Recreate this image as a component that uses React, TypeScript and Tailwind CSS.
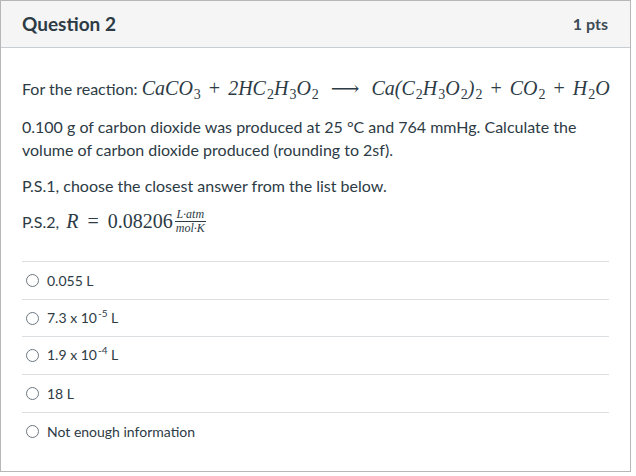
import React from "react";

const serif = { fontFamily: '"Liberation Serif", "DejaVu Serif", serif' };

function M({ children }: { children: React.ReactNode }) {
    return (
        <span className="italic text-[20px]" style={serif}>
            {children}
        </span>
    );
}

function Sub({ children }: { children: React.ReactNode }) {
    return <span className="not-italic text-[14px] relative top-[4px] ml-[1px]">{children}</span>;
}

function Op({ children }: { children: React.ReactNode }) {
    return <span className="not-italic mx-[8px]">{children}</span>;
}

function Exp({ children }: { children: React.ReactNode }) {
    return <span className="text-[10px] relative top-[-6px] ml-[1px]">{children}</span>;
}

const answers = [
    <>0.055 L</>,
    <>
        7.3 x 10<Exp>-5</Exp> L
    </>,
    <>
        1.9 x 10<Exp>-4</Exp> L
    </>,
    <>18 L</>,
    <>Not enough information</>,
];

export default function App() {
    return (
        <div className="w-[636px] h-[476px] bg-white" style={{ fontFamily: "Lato, sans-serif" }}>
            <div className="w-[631px] h-[472px] border border-[#b7b7b7] flex flex-col text-[#2d3b45]">
                <div className="h-[47px] bg-[#f5f5f5] border-b border-[#c7cdd1] flex items-center justify-between pl-[21px] pr-[22px] shrink-0">
                    <span className="text-[19px] font-bold">Question 2</span>
                    <span className="text-[16px] font-bold text-[#3d4b55]">1 pts</span>
                </div>
                <div className="px-[21px] pt-[29px] text-[16px] leading-[23px]">
                    <p className="whitespace-nowrap">
                        For the reaction:{" "}
                        <M>
                            CaCO<Sub>3</Sub>
                            <Op>+</Op>2HC<Sub>2</Sub>H<Sub>3</Sub>O<Sub>2</Sub>
                            <span className="not-italic mx-[12px]">⟶</span>
                            Ca(C<Sub>2</Sub>H<Sub>3</Sub>O<Sub>2</Sub>)<Sub>2</Sub>
                            <Op>+</Op>CO<Sub>2</Sub>
                            <Op>+</Op>H<Sub>2</Sub>O
                        </M>
                    </p>
                    <p className="mt-[13px] pr-[20px]">
                        0.100 g of carbon dioxide was produced at 25 °C and 764 mmHg. Calculate the volume of carbon dioxide produced (rounding to 2sf).
                    </p>
                    <p className="mt-[13px]">P.S.1, choose the closest answer from the list below.</p>
                    <p className="mt-[13px] h-[23px] flex items-center">
                        <span>P.S.2,&nbsp;</span>
                        <span className="ml-[3px]">
                            <M>R</M>
                        </span>
                        <span className="mx-[9px] text-[20px]" style={serif}>=</span>
                        <span className="text-[20px]" style={serif}>0.08206</span>
                        <span className="inline-flex flex-col items-center ml-[2px] italic text-[12px] leading-[13px]" style={serif}>
                            <span className="px-[1px]">L·atm</span>
                            <span className="border-t border-[#2d3b45] px-[1px]">mol·K</span>
                        </span>
                    </p>
                    <div className="mt-[28px] text-[14px]">
                        {answers.map((a, i) => (
                            <div key={i} className="h-[37.7px] border-t border-[#dcdfe2] flex items-center pl-[4px]">
                                <span className="w-[13px] h-[13px] rounded-full border border-[#6b7780] mr-[8px] shrink-0" />
                                <span>{a}</span>
                            </div>
                        ))}
                    </div>
                </div>
            </div>
        </div>
    );
}
